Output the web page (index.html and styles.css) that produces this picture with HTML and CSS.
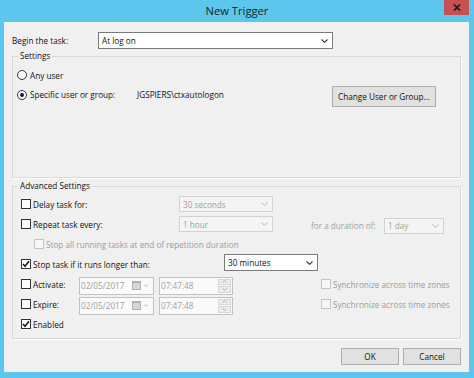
FILE: index.html
```html
<!DOCTYPE html>
<html lang="en">
<head>
    <meta charset="UTF-8">
    <meta name="viewport" content="width=device-width, initial-scale=1.0">
    <title>New Trigger</title>
    <link rel="stylesheet" href="styles.css">
</head>
<body>

<div class="window">
    <div class="titlebar">
        <span></span>
        <span class="title">New Trigger</span>
        <span class="close-btn">
            <svg width="8" height="7" viewBox="0 0 8 7"><path d="M1 0.5 L7 6.5 M7 0.5 L1 6.5" stroke="#1a1a1a" stroke-width="1.7" fill="none"/></svg>
        </span>
    </div>

    <div class="client">
        <div class="begin-row">
            <span class="begin-label">Begin the task:</span>
            <div class="combo combo-begin">
                <span>At log on</span>
                <svg class="chev" width="7" height="4" viewBox="0 0 7 4"><polyline points="0.5,0.5 3.5,3.3 6.5,0.5" fill="none" stroke="currentColor" stroke-width="1.1"/></svg>
            </div>
        </div>

        <!-- Settings group -->
        <fieldset class="group group-settings">
            <legend>Settings</legend>
            <div class="settings-body">
                <div class="opt-row">
                    <span class="radio"></span>
                    <span>Any user</span>
                </div>
                <div class="opt-row specific-row">
                    <span class="radio checked"></span>
                    <span class="specific-label">Specific user or group:</span>
                    <span class="account">JGSPIERS\ctxautologon</span>
                    <button class="btn btn-change">Change User or Group...</button>
                </div>
            </div>
        </fieldset>

        <!-- Advanced settings group -->
        <fieldset class="group group-advanced">
            <legend>Advanced Settings</legend>
            <div class="advanced-body">
                <div class="adv-row">
                    <div class="cell cell-delay">
                        <span class="check"></span>
                        <span>Delay task for:</span>
                    </div>
                    <div class="combo disabled combo-mid">
                        <span>30 seconds</span>
                        <svg class="chev" width="7" height="4" viewBox="0 0 7 4"><polyline points="0.5,0.5 3.5,3.3 6.5,0.5" fill="none" stroke="currentColor" stroke-width="1"/></svg>
                    </div>
                </div>

                <div class="adv-row">
                    <div class="cell cell-delay">
                        <span class="check"></span>
                        <span>Repeat task every:</span>
                    </div>
                    <div class="combo disabled combo-mid">
                        <span>1 hour</span>
                        <svg class="chev" width="7" height="4" viewBox="0 0 7 4"><polyline points="0.5,0.5 3.5,3.3 6.5,0.5" fill="none" stroke="currentColor" stroke-width="1"/></svg>
                    </div>
                    <span class="duration-label">for a duration of:</span>
                    <div class="combo disabled combo-day">
                        <span>1 day</span>
                        <svg class="chev" width="7" height="4" viewBox="0 0 7 4"><polyline points="0.5,0.5 3.5,3.3 6.5,0.5" fill="none" stroke="currentColor" stroke-width="1"/></svg>
                    </div>
                </div>

                <div class="adv-row row-indent">
                    <span class="check disabled"></span>
                    <span class="muted">Stop all running tasks at end of repetition duration</span>
                </div>

                <div class="adv-row">
                    <div class="cell cell-stop">
                        <span class="check">
                            <svg width="8" height="8" viewBox="0 0 8 8"><polyline points="1,4 3,6.3 7,1.2" fill="none" stroke="#1a1a1a" stroke-width="1.6"/></svg>
                        </span>
                        <span>Stop task if it runs longer than:</span>
                    </div>
                    <div class="combo combo-mid combo-stop">
                        <span>30 minutes</span>
                        <svg class="chev" width="7" height="4" viewBox="0 0 7 4"><polyline points="0.5,0.5 3.5,3.3 6.5,0.5" fill="none" stroke="currentColor" stroke-width="1.1"/></svg>
                    </div>
                </div>

                <div class="adv-row row-date">
                    <div class="cell cell-date">
                        <span class="check"></span>
                        <span>Activate:</span>
                    </div>
                    <div class="field field-date">
                        <span>02/05/2017</span>
                        <span class="cal-icon"></span>
                        <svg class="chev-small" width="4" height="3" viewBox="0 0 4 3"><polyline points="0.3,0.5 2,2.4 3.7,0.5" fill="none" stroke="currentColor" stroke-width="0.8"/></svg>
                    </div>
                    <div class="field field-time">
                        <span>07:47:48</span>
                        <div class="spinner">
                            <span class="spin"><svg width="5" height="3" viewBox="0 0 5 3"><polyline points="0.5,2.5 2.5,0.6 4.5,2.5" fill="none" stroke="currentColor" stroke-width="0.8"/></svg></span>
                            <span class="spin"><svg width="5" height="3" viewBox="0 0 5 3"><polyline points="0.5,0.5 2.5,2.4 4.5,0.5" fill="none" stroke="currentColor" stroke-width="0.8"/></svg></span>
                        </div>
                    </div>
                    <div class="cell cell-sync">
                        <span class="check disabled"></span>
                        <span class="muted">Synchronize across time zones</span>
                    </div>
                </div>

                <div class="adv-row row-date">
                    <div class="cell cell-date">
                        <span class="check"></span>
                        <span>Expire:</span>
                    </div>
                    <div class="field field-date">
                        <span>02/05/2017</span>
                        <span class="cal-icon"></span>
                        <svg class="chev-small" width="4" height="3" viewBox="0 0 4 3"><polyline points="0.3,0.5 2,2.4 3.7,0.5" fill="none" stroke="currentColor" stroke-width="0.8"/></svg>
                    </div>
                    <div class="field field-time">
                        <span>07:47:48</span>
                        <div class="spinner">
                            <span class="spin"><svg width="5" height="3" viewBox="0 0 5 3"><polyline points="0.5,2.5 2.5,0.6 4.5,2.5" fill="none" stroke="currentColor" stroke-width="0.8"/></svg></span>
                            <span class="spin"><svg width="5" height="3" viewBox="0 0 5 3"><polyline points="0.5,0.5 2.5,2.4 4.5,0.5" fill="none" stroke="currentColor" stroke-width="0.8"/></svg></span>
                        </div>
                    </div>
                    <div class="cell cell-sync">
                        <span class="check disabled"></span>
                        <span class="muted">Synchronize across time zones</span>
                    </div>
                </div>

                <div class="adv-row">
                    <span class="check">
                        <svg width="8" height="8" viewBox="0 0 8 8"><polyline points="1,4 3,6.3 7,1.2" fill="none" stroke="#1a1a1a" stroke-width="1.6"/></svg>
                    </span>
                    <span>Enabled</span>
                </div>
            </div>
        </fieldset>

        <div class="dialog-buttons">
            <button class="btn btn-dialog">OK</button>
            <button class="btn btn-dialog">Cancel</button>
        </div>
    </div>
</div>

</body>
</html>
```

FILE: styles.css
```css
body {
    margin: 0;
    font-family: "Open Sans", "Liberation Sans", sans-serif;
    font-size: 8.2px;
    color: #111;
}

.window {
    width: 474px;
    height: 378px;
    background-color: #5cc6ec;
    display: flex;
    flex-direction: column;
}

/* Title bar */
.titlebar {
    height: 22px;
    display: grid;
    grid-template-columns: 1fr auto 1fr;
    align-items: start;
}

.title {
    font-size: 11.2px;
    line-height: 22px;
    color: #16242c;
}

.close-btn {
    justify-self: end;
    width: 25px;
    height: 15px;
    margin-right: 5px;
    background-color: #c75050;
    display: flex;
    align-items: center;
    justify-content: center;
}

/* Client area */
.client {
    flex: 1;
    margin: 0 5px 6px 4px;
    padding: 10px 8px 0;
    background-color: #f0f0f0;
    display: flex;
    flex-direction: column;
}

.begin-row {
    display: flex;
    align-items: center;
    height: 17px;
}

.begin-label {
    width: 86px;
}

/* Combo boxes */
.combo {
    box-sizing: border-box;
    height: 16px;
    display: flex;
    align-items: center;
    justify-content: space-between;
    padding: 0 4px 0 3px;
    background-color: #fff;
    border: 1px solid #7a7a7a;
    color: #111;
}

.combo .chev {
    color: #333;
}

.combo.disabled {
    background-color: #f4f4f4;
    border-color: #d2d2d2;
    color: #a0a0a0;
}

.combo.disabled .chev {
    color: #b4b4b4;
}

.combo-begin {
    width: 235px;
    height: 17px;
}

.combo-mid {
    width: 94px;
}

.combo-stop {
    height: 17px;
    margin-top: -3px;
}

.combo-day {
    width: 60px;
    margin-top: 3px;
}

/* Group boxes */
.group {
    margin: 1px 0 0;
    padding: 0;
    min-width: 0;
    border: 1px solid #d8d8d8;
    box-shadow: 1px 1px 0 #fff;
}

.group legend {
    margin-left: 5px;
    padding: 0 2px;
    line-height: 12px;
}

.group-advanced {
    margin-top: 2px;
}

.settings-body {
    height: 112px;
    padding: 3px 24px 0 4px;
}

.opt-row {
    display: flex;
    align-items: center;
    height: 20px;
}

.specific-row {
    align-items: flex-start;
    line-height: 20px;
}

.radio {
    box-sizing: border-box;
    width: 10px;
    height: 10px;
    margin-right: 3px;
    border: 1px solid #333;
    border-radius: 50%;
    background-color: #fff;
    display: flex;
    align-items: center;
    justify-content: center;
    flex: none;
}

.specific-row .radio {
    margin-top: 5px;
}

.radio.checked::after {
    content: "";
    width: 4px;
    height: 4px;
    border-radius: 50%;
    background-color: #1a1a1a;
}

.specific-label {
    width: 107px;
}

/* Buttons */
.btn {
    box-sizing: border-box;
    padding: 0;
    font: inherit;
    color: #111;
    background-color: #e1e1e1;
    border: 1px solid #adadad;
}

.btn-change {
    margin-left: auto;
    margin-top: 1px;
    width: 104px;
    height: 21px;
}

.dialog-buttons {
    display: flex;
    justify-content: flex-end;
    gap: 4px;
    margin-top: 9px;
}

.btn-dialog {
    width: 58px;
    height: 17px;
}

/* Advanced settings */
.advanced-body {
    padding: 2px 0 4px 8px;
}

.adv-row {
    display: flex;
    align-items: center;
    height: 20px;
}

.row-indent {
    padding-left: 13px;
}

.cell {
    display: flex;
    align-items: center;
}

.cell-delay {
    width: 158px;
}

.cell-stop {
    width: 203px;
}

.cell-date {
    width: 58px;
}

.cell-sync {
    margin-left: 88px;
}

.check {
    box-sizing: border-box;
    width: 10px;
    height: 10px;
    margin-right: 2px;
    border: 1px solid #333;
    background-color: #fff;
    display: flex;
    align-items: center;
    justify-content: center;
    flex: none;
}

.check.disabled {
    border-color: #c4c4c4;
    background-color: #f6f6f6;
}

.muted {
    color: #9c9c9c;
}

.duration-label {
    margin-left: 38px;
    width: 73px;
    color: #a0a0a0;
    margin-top: 3px;
}

/* Date and time pickers */
.field {
    box-sizing: border-box;
    height: 18px;
    margin-top: 3px;
    display: flex;
    align-items: center;
    background-color: #fafafa;
    border: 1px solid #c2c2c2;
    color: #a0a0a0;
}

.field-date {
    width: 75px;
    padding-left: 1px;
}

.field-date .cal-icon {
    width: 7px;
    height: 6px;
    margin-left: auto;
    background-color: #d6d6d6;
    border: 1px solid #b0b0b0;
    border-top-width: 2px;
}

.chev-small {
    margin: 0 5px 0 3px;
    color: #b0b0b0;
}

.field-time {
    width: 74px;
    margin-left: 5px;
    padding-left: 1px;
}

.spinner {
    margin-left: auto;
    margin-right: 1px;
    width: 13px;
    height: 14px;
    display: flex;
    flex-direction: column;
    gap: 1px;
}

.spin {
    flex: 1;
    display: flex;
    align-items: center;
    justify-content: center;
    background-color: #ececec;
    border: 1px solid #d6d6d6;
    color: #a0a0a0;
}
```
